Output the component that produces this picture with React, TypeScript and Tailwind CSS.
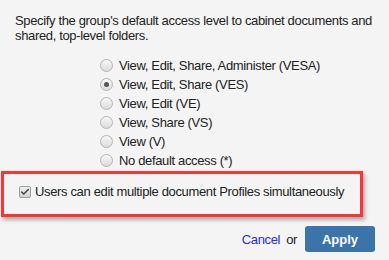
import { Check } from 'lucide-react'

const options = [
  { label: 'View, Edit, Share, Administer (VESA)', checked: false },
  { label: 'View, Edit, Share (VES)', checked: true },
  { label: 'View, Edit (VE)', checked: false },
  { label: 'View, Share (VS)', checked: false },
  { label: 'View (V)', checked: false },
  { label: 'No default access (*)', checked: false },
]

function Radio({ checked }: { checked: boolean }) {
  return (
    <span className="w-[13px] h-[13px] rounded-full border border-[#b4b4b4] bg-gradient-to-b from-[#f8f8f8] to-[#dcdcdc] flex items-center justify-center shrink-0">
      {checked && <span className="w-[5px] h-[5px] rounded-full bg-[#555]" />}
    </span>
  )
}

export default function App() {
  return (
    <div
      className="w-[389px] h-[260px] bg-[#f4f4f4] text-[#222] text-[13px] leading-[15px] tracking-[-0.35px] overflow-hidden"
      style={{ fontFamily: '"Liberation Sans", Arial, sans-serif' }}
    >
      <p className="pl-[15px] pt-[13px] whitespace-nowrap">
        Specify the group's default access level to cabinet documents and
        <br />
        shared, top-level folders.
      </p>

      <div className="mt-[13px] pl-[100px] flex flex-col">
        {options.map(o => (
          <div key={o.label} className="h-[19px] flex items-center gap-[6px]">
            <Radio checked={o.checked} />
            <span>{o.label}</span>
          </div>
        ))}
      </div>

      <div className="ml-[1px] mt-[1px] w-[362px] h-[46px] border-[3px] border-[#ff3333] shadow-[2px_3px_4px_rgba(0,0,0,0.3)] flex items-center pl-[15px] pb-[5px] gap-[4px]">
        <span className="w-[12px] h-[12px] rounded-[2px] border border-[#a0a0a0] bg-gradient-to-b from-[#f0f0f0] to-[#d0d0d0] flex items-center justify-center shrink-0">
          <Check size={10} strokeWidth={3.5} className="text-[#444]" />
        </span>
        <span className="whitespace-nowrap">Users can edit multiple document Profiles simultaneously</span>
      </div>

      <div className="mt-[9px] pr-[14px] flex items-center justify-end">
        <a className="text-[#2b2be8] mr-[6px] cursor-pointer">Cancel</a>
        <span className="mr-[8px]">or</span>
        <button className="w-[70px] h-[26px] rounded-[3px] bg-[#3b74aa] text-white font-bold text-[13px] tracking-normal">
          Apply
        </button>
      </div>
    </div>
  )
}
